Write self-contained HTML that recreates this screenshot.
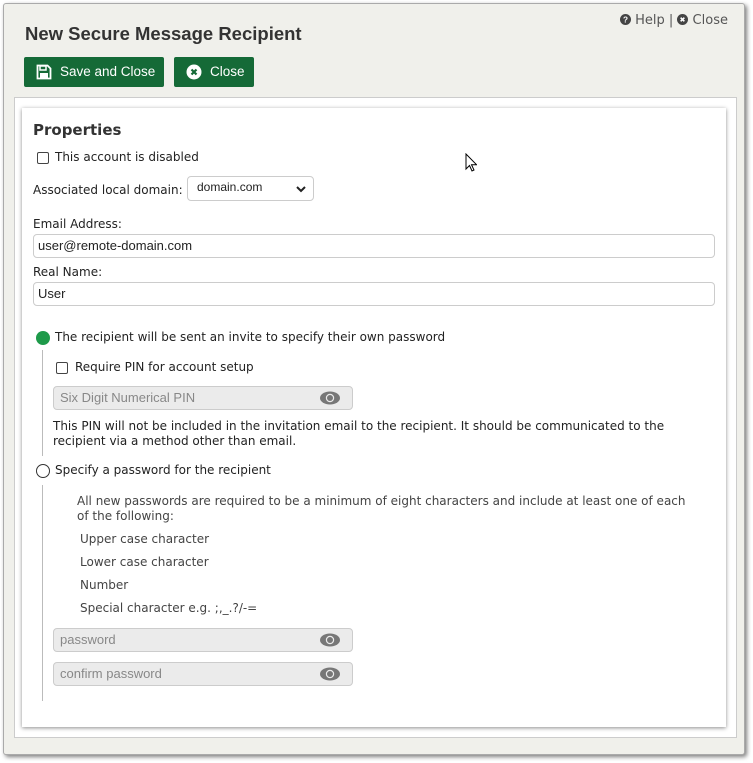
<!DOCTYPE html>
<html><head><meta charset="utf-8"><style>
*{box-sizing:border-box;margin:0;padding:0}
body{width:753px;height:763px;background:#fff;font-family:"DejaVu Sans",Verdana,sans-serif;font-size:12px;color:#222;position:relative;overflow:hidden}
.a{position:absolute;white-space:nowrap}
.dlg{position:absolute;left:3px;top:3px;width:742px;height:752px;background:#f0f0eb;border:1px solid #aaa;border-radius:3px;box-shadow:2px 2px 4px rgba(0,0,0,.5)}
.panel{position:absolute;left:14px;top:97px;width:723px;height:641px;background:#fff;border:1px solid #ccc}
.card{position:absolute;left:22px;top:108px;width:704px;height:619px;background:#fff;box-shadow:0 1px 4px rgba(0,0,0,.45)}
.btn{position:absolute;top:57px;height:30px;background:#156a37;border-radius:2px;color:#fff;font-family:"Liberation Sans",Arial,sans-serif;font-size:13.5px;line-height:30px}
.cb{position:absolute;width:12px;height:12px;border:1px solid #444;border-radius:2px;background:#fff}
.inp{position:absolute;height:24px;border:1px solid #ccc;border-radius:4px;background:#fff;font-family:"Liberation Sans",Arial,sans-serif;font-size:13px;line-height:22px;padding-left:4px}
.pin{position:absolute;height:24px;width:300px;left:53px;border:1px solid #ccc;border-radius:4px;background:#ebebeb;color:#888;font-family:"Liberation Sans",Arial,sans-serif;font-size:13px;line-height:22px;padding-left:6px}
.eye{position:absolute;right:11px;top:4px}
.vl{position:absolute;left:42px;width:1px;background:#bbb}
</style></head><body>
<div class="dlg"></div>
<div class="a" style="left:25px;top:23px;font-family:'Liberation Sans',Arial,sans-serif;font-size:18.5px;font-weight:bold;color:#333">New Secure Message Recipient</div>
<div class="a" style="left:620px;top:13px;font-size:13px;color:#555">
<svg width="11" height="11" viewBox="0 0 12 12" style="vertical-align:-1px"><circle cx="6" cy="6" r="6" fill="#444"/><text x="6" y="9.5" font-size="9" font-weight="bold" text-anchor="middle" fill="#fff" font-family="Liberation Sans">?</text></svg> Help | <svg width="11" height="11" viewBox="0 0 12 12" style="vertical-align:-1px"><circle cx="6" cy="6" r="6" fill="#444"/><path d="M4 4L8 8M8 4L4 8" stroke="#fff" stroke-width="1.8"/></svg> Close</div>
<div class="btn" style="left:24px;width:140px"><svg class="a" style="left:12px;top:7px" width="16" height="16" viewBox="0 0 16 16"><path d="M1.5 1.5h10l3 3v10h-13z" fill="none" stroke="#fff" stroke-width="1.8"/><rect x="4" y="2" width="6" height="4" fill="none" stroke="#fff" stroke-width="1.5"/><rect x="4" y="9" width="8" height="5" fill="#fff"/></svg><span class="a" style="left:36px">Save and Close</span></div>
<div class="btn" style="left:174px;width:80px"><svg class="a" style="left:12px;top:7px" width="16" height="16" viewBox="0 0 16 16"><circle cx="8" cy="8" r="7.5" fill="#fff"/><path d="M5.5 5.5L10.5 10.5M10.5 5.5L5.5 10.5" stroke="#156a37" stroke-width="2.2"/></svg><span class="a" style="left:36px">Close</span></div>
<div class="panel"></div>
<div class="card"></div>
<div class="a" style="left:33px;top:121px;font-size:15px;font-weight:bold;color:#333">Properties</div>
<div class="cb" style="left:37px;top:152px"></div>
<div class="a" style="left:55px;top:150px">This account is disabled</div>
<div class="a" style="left:33px;top:183px">Associated local domain:</div>
<div class="inp" style="left:187px;top:176px;width:127px;height:25px;font-size:12px;line-height:20px;padding-left:9px">domain.com<svg class="a" style="right:7px;top:9px" width="10" height="7" viewBox="0 0 10 7"><path d="M1 1l4 4 4-4" fill="none" stroke="#222" stroke-width="2"/></svg></div>
<div class="a" style="left:33px;top:217px">Email Address:</div>
<div class="inp" style="left:33px;top:234px;width:682px">user@remote-domain.com</div>
<div class="a" style="left:33px;top:265px">Real Name:</div>
<div class="inp" style="left:33px;top:282px;width:682px">User</div>
<div class="a" style="left:36px;top:331px;width:14px;height:14px;border-radius:50%;background:#1e9a4a"></div>
<div class="a" style="left:55px;top:330px">The recipient will be sent an invite to specify their own password</div>
<div class="vl" style="top:350px;height:106px"></div>
<div class="cb" style="left:56px;top:362px"></div>
<div class="a" style="left:75px;top:360px">Require PIN for account setup</div>
<div class="pin" style="top:386px">Six Digit Numerical PIN<svg class="eye" width="22" height="14" viewBox="0 0 22 14"><ellipse cx="11" cy="7" rx="10" ry="6.5" fill="#777"/><circle cx="11" cy="7" r="4.2" fill="#ebebeb"/><circle cx="11" cy="7" r="3" fill="#777"/></svg></div>
<div class="a" style="left:53px;top:419px;line-height:15px">This PIN will not be included in the invitation email to the recipient. It should be communicated to the<br>recipient via a method other than email.</div>
<div class="a" style="left:36px;top:464px;width:14px;height:14px;border-radius:50%;border:1px solid #333;background:#fff"></div>
<div class="a" style="left:55px;top:463px">Specify a password for the recipient</div>
<div class="vl" style="top:485px;height:216px"></div>
<div class="a" style="left:77px;top:494px;line-height:15px;color:#444">All new passwords are required to be a minimum of eight characters and include at least one of each<br>of the following:</div>
<div class="a" style="left:80px;top:532px;color:#444">Upper case character</div>
<div class="a" style="left:80px;top:555px;color:#444">Lower case character</div>
<div class="a" style="left:80px;top:578px;color:#444">Number</div>
<div class="a" style="left:80px;top:601px;color:#444">Special character e.g. ;,_.?/-=</div>
<div class="pin" style="top:628px">password<svg class="eye" width="22" height="14" viewBox="0 0 22 14"><ellipse cx="11" cy="7" rx="10" ry="6.5" fill="#777"/><circle cx="11" cy="7" r="4.2" fill="#ebebeb"/><circle cx="11" cy="7" r="3" fill="#777"/></svg></div>
<div class="pin" style="top:662px">confirm password<svg class="eye" width="22" height="14" viewBox="0 0 22 14"><ellipse cx="11" cy="7" rx="10" ry="6.5" fill="#777"/><circle cx="11" cy="7" r="4.2" fill="#ebebeb"/><circle cx="11" cy="7" r="3" fill="#777"/></svg></div>
<svg class="a" style="left:465px;top:153px" width="12" height="19" viewBox="0 0 12 19"><path d="M1 1v15l3.5-3.5 2.5 5.5 2-1-2.5-5.3h5z" fill="#fff" stroke="#000" stroke-width="1"/></svg>
</body></html>
